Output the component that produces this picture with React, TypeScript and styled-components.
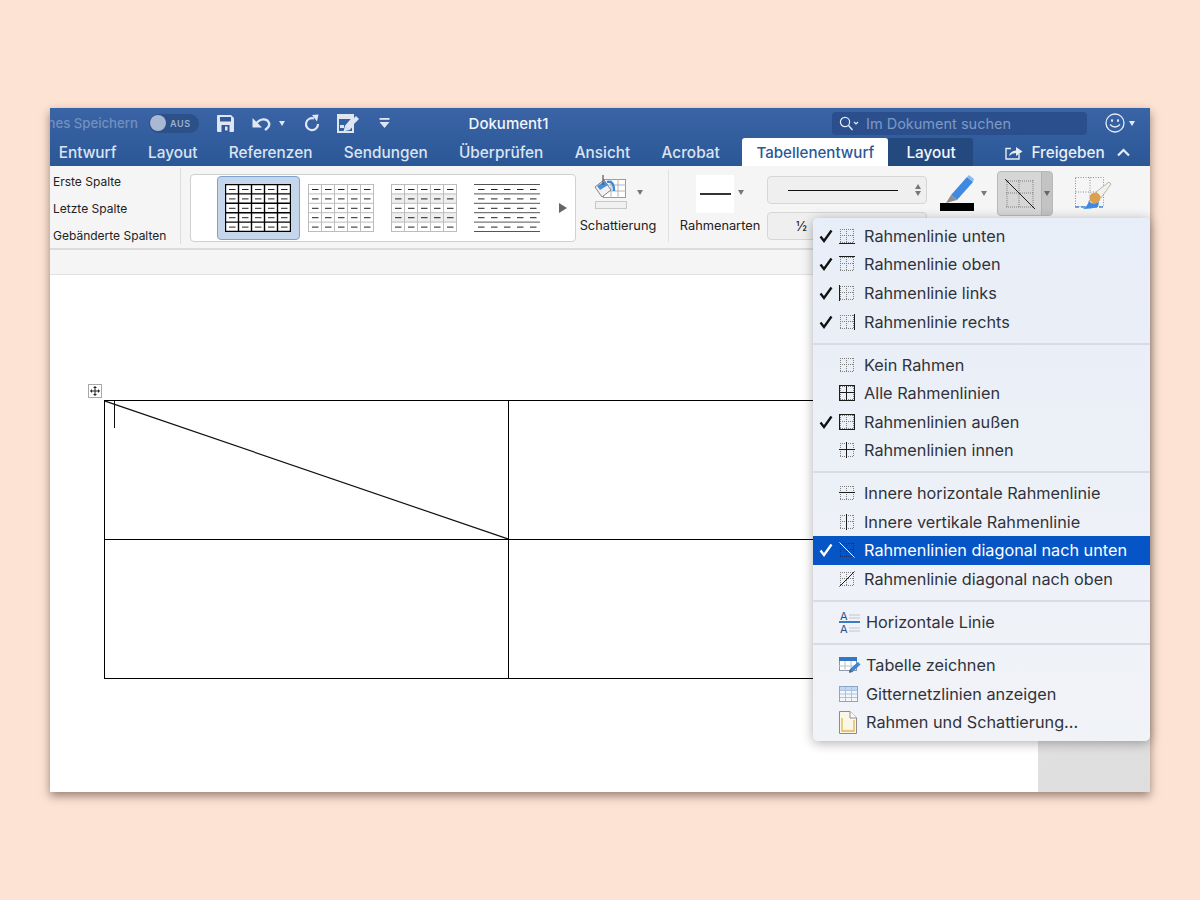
import React from "react";
import styled, { createGlobalStyle } from "styled-components";

const Global = createGlobalStyle`
  html, body { margin: 0; padding: 0; background: #fde3d3; height: 100%; }
  body { font-family: Inter, "Liberation Sans", sans-serif; }
  #root { height: 900px; padding-top: 108px; box-sizing: border-box; }
`;

const Window = styled.div`
  position: relative;
  margin-left: 50px;
  width: 1100px;
  height: 684px;
  display: flex;
  flex-direction: column;
  background: #fff;
  box-shadow: 0 4px 9px rgba(70, 50, 40, 0.55);
`;
const Head = styled.div`
  background: linear-gradient(#3a64a5, #2b5797);
  height: 58px;
  flex: none;
`;
const TitleBar = styled.div`
  height: 30px;
  display: flex;
  align-items: center;
`;
const AutoSave = styled.div`
  width: 88px;
  overflow: hidden;
  display: flex;
  justify-content: flex-end;
  white-space: nowrap;
  font-size: 13.2px;
  font-weight: 500;
  color: #7390bd;
  flex: none;
`;
const Toggle = styled.div`
  margin-left: 11px;
  width: 50px;
  height: 19px;
  border-radius: 10px;
  background: #2c5088;
  display: flex;
  align-items: center;
  gap: 4px;
  flex: none;
`;
const Knob = styled.span`
  width: 16px;
  height: 16px;
  margin-left: 1px;
  border-radius: 50%;
  background: #a9b8d3;
`;
const ToggleText = styled.span`
  font-size: 9px;
  font-weight: 600;
  letter-spacing: 0.6px;
  color: #9fb2d1;
`;
const Quick = styled.div`
  margin-left: 18px;
  width: 178px;
  display: flex;
  align-items: center;
  flex: none;
`;
const Slot = styled.span<{ $w: number }>`
  width: ${(p) => p.$w}px;
  display: flex;
  align-items: center;
  flex: none;
`;
const DocTitle = styled.div`
  width: 227px;
  text-align: center;
  font-size: 15px;
  font-weight: 500;
  color: #f2f5fa;
  flex: none;
`;
const Search = styled.div`
  margin-left: 210px;
  width: 255px;
  height: 23px;
  box-sizing: border-box;
  padding-left: 7px;
  border-radius: 4px;
  background: #2b4f8c;
  display: flex;
  align-items: center;
  gap: 7px;
  font-size: 14.5px;
  color: #7e99c4;
  flex: none;
`;
const Smiley = styled.div`
  margin-left: 18px;
  display: flex;
  align-items: center;
  gap: 4px;
`;
const TabRow = styled.div`
  height: 28px;
  display: flex;
  align-items: stretch;
`;
const Tab = styled.div`
  padding: 0 15.7px;
  display: flex;
  align-items: center;
  font-size: 15.35px;
  font-weight: 500;
  color: #dbe4f1;
  white-space: nowrap;
  &:first-child { margin-left: -7px; }
`;
const ActiveTab = styled(Tab)`
  margin-left: 7px;
  width: 146px;
  padding: 0 14px;
  box-sizing: border-box;
  background: #fff;
  color: #2b579a;
  border-radius: 3px 3px 0 0;
  font-size: 15.1px;
`;
const DarkTab = styled(Tab)`
  width: 85px;
  padding: 0 18px;
  box-sizing: border-box;
  background: #24497f;
  color: #f3f6fb;
  border-radius: 0 3px 0 0;
`;
const Share = styled.div`
  margin-left: 32px;
  display: flex;
  align-items: center;
  gap: 8px;
  font-size: 15.35px;
  font-weight: 500;
  color: #e8eef6;
`;
const Chevron = styled.span`
  margin-left: 4px;
  display: flex;
  align-items: center;
`;
const Ribbon = styled.div`
  height: 84px;
  flex: none;
  box-sizing: border-box;
  border-bottom: 2px solid #dcdcdc;
  background: #f5f5f5;
  display: flex;
  align-items: flex-start;
  overflow: hidden;
`;
const Checks = styled.div`
  width: 131px;
  height: 76px;
  margin-top: 2px;
  padding: 6px 0 1px 3px;
  box-sizing: border-box;
  border-right: 1px solid #dedede;
  display: flex;
  flex-direction: column;
  justify-content: space-between;
  font-size: 12px;
  color: #222;
  flex: none;
`;
const Gallery = styled.div`
  margin: 8px 0 0 9px;
  width: 386px;
  height: 68px;
  box-sizing: border-box;
  background: #fff;
  border: 1px solid #d0d0d0;
  border-radius: 4px;
  display: flex;
  align-items: center;
  padding-left: 26px;
  flex: none;
`;
const Thumb = styled.div<{ $selected?: boolean }>`
  width: 83px;
  height: 64px;
  box-sizing: border-box;
  padding-top: 7px;
  padding-left: 7px;
  border: 1px solid ${(p) => (p.$selected ? "#7ea3cf" : "transparent")};
  border-radius: 4px;
  background: ${(p) => (p.$selected ? "#c6d6ea" : "transparent")};
  flex: none;
`;
const GalleryArrow = styled.span`
  margin-left: 10px;
  width: 0;
  height: 0;
  border-left: 8px solid #666;
  border-top: 5.5px solid transparent;
  border-bottom: 5.5px solid transparent;
`;
const Group = styled.div<{ $w: number; $ml: number }>`
  width: ${(p) => p.$w}px;
  margin-left: ${(p) => p.$ml}px;
  height: 76px;
  margin-top: 2px;
  display: flex;
  flex-direction: column;
  align-items: center;
  justify-content: space-between;
  padding-bottom: 11px;
  box-sizing: border-box;
  flex: none;
`;
const GroupLabel = styled.div`
  font-size: 12.8px;
  color: #222;
  white-space: nowrap;
`;
const IconWithCaret = styled.div<{ $gap: number }>`
  height: 48px;
  display: flex;
  align-items: center;
  gap: ${(p) => p.$gap}px;
`;
const VSep = styled.div`
  margin: 4px 0 0 11px;
  width: 1px;
  height: 72px;
  background: #e0e0e0;
  flex: none;
`;
const LineSwatch = styled.div`
  width: 38px;
  height: 38px;
  margin-top: 4px;
  background: #fff;
  display: flex;
  align-items: center;
  justify-content: center;
`;
const SwatchLine = styled.span`
  width: 31px;
  height: 1.5px;
  background: #333;
`;
const Combos = styled.div`
  margin: 10px 0 0 7px;
  width: 160px;
  display: flex;
  flex-direction: column;
  gap: 8px;
  flex: none;
`;
const Combo = styled.div`
  height: 28px;
  box-sizing: border-box;
  background: #efefef;
  border: 1px solid #d6d6d6;
  border-radius: 4px;
  display: flex;
  align-items: center;
  padding: 0 5px 0 20px;
  font-size: 13px;
  color: #222;
`;
const ComboHalf = styled.span`
  margin-left: 8px;
`;
const ComboLine = styled.span`
  width: 110px;
  height: 1px;
  background: #111;
`;
const Stepper = styled.span`
  margin-left: auto;
  display: flex;
  flex-direction: column;
  gap: 2px;
`;
const Tri = styled.span<{ $up?: boolean; $c?: string }>`
  width: 0;
  height: 0;
  border-left: 3.5px solid transparent;
  border-right: 3.5px solid transparent;
  ${(p) => (p.$up ? "border-bottom" : "border-top")}: 5px solid ${(p) => p.$c ?? "#777"};
`;
const PenTool = styled.div`
  margin: 8px 0 0 13px;
  display: flex;
  align-items: center;
  gap: 5px;
  flex: none;
`;
const BorderButton = styled.div`
  margin: 5px 0 0 10px;
  width: 56px;
  height: 45px;
  box-sizing: border-box;
  background: #d6d6d6;
  border: 1px solid #b9b9b9;
  border-radius: 4px;
  display: flex;
  flex: none;
`;
const BorderFace = styled.span`
  width: 43px;
  display: flex;
  align-items: center;
  justify-content: center;
`;
const BorderDrop = styled.span`
  flex: 1;
  background: #c3c3c3;
  border-left: 1px solid #b3b3b3;
  display: flex;
  align-items: center;
  justify-content: center;
`;
const Painter = styled.div`
  margin: 10px 0 0 21px;
  flex: none;
`;
const Band = styled.div`
  height: 24px;
  flex: none;
  background: #f5f5f5;
  border-bottom: 1px solid #e2e2e2;
`;
const Body = styled.div`
  flex: 1;
  display: flex;
  min-height: 0;
`;
const Page = styled.div`
  width: 988px;
  flex: none;
  background: #fff;
  box-sizing: border-box;
  padding: 125px 0 0 54px;
`;
const Side = styled.div`
  flex: 1;
  background: linear-gradient(135deg, #e6e6e6, #dedede);
`;
const TableWrap = styled.div`
  position: relative;
  width: 810px;
`;
const Grid = styled.div`
  display: grid;
  grid-template-columns: 404px 405px;
  grid-auto-rows: 139px;
  border-top: 1px solid #000;
  border-left: 1px solid #000;
`;
const Cell = styled.div`
  position: relative;
  border-right: 1px solid #000;
  border-bottom: 1px solid #000;
`;
const Diagonal = styled.svg`
  position: absolute;
  inset: 0;
  width: 100%;
  height: 100%;
`;
const Caret = styled.span`
  position: absolute;
  left: 9px;
  top: 0;
  width: 1px;
  height: 27px;
  background: #111;
`;
const MoveHandle = styled.div`
  position: absolute;
  left: -16px;
  top: -16px;
  width: 14px;
  height: 14px;
  box-sizing: border-box;
  background: #fff;
  border: 1px solid #a8a8a8;
  display: flex;
  align-items: center;
  justify-content: center;
`;
const Menu = styled.div`
  position: absolute;
  left: 763px;
  top: 110px;
  width: 337px;
  height: 523px;
  box-sizing: border-box;
  padding-top: 3.6px;
  border-radius: 5px;
  background: linear-gradient(#e8eef7, #f1f3f7);
  box-shadow: 0 2px 12px rgba(0, 0, 0, 0.32);
`;
const Row = styled.div<{ $active?: boolean }>`
  height: 28.55px;
  display: flex;
  align-items: center;
  font-size: 16.25px;
  color: ${(p) => (p.$active ? "#fff" : "#30333a")};
  background: ${(p) => (p.$active ? "#0655c7" : "transparent")};
  white-space: nowrap;
`;
const CheckBox = styled.span`
  width: 26px;
  padding-left: 6px;
  box-sizing: border-box;
  display: flex;
  align-items: center;
  flex: none;
`;
const RowIcon = styled.span<{ $wide?: boolean }>`
  width: ${(p) => (p.$wide ? 27 : 25)}px;
  display: flex;
  align-items: center;
  flex: none;
`;
const Sep = styled.div`
  height: 14.55px;
  display: flex;
  align-items: center;
  &::after {
    content: "";
    margin-top: 1px;
    width: 100%;
    height: 2px;
    background: #d9dde3;
  }
`;

function TableThumb({ kind }: { kind: "black" | "gray" | "band" | "lines" }) {
  const W = 66;
  const H = 48;
  const xs = [0, 1, 2, 3, 4, 5].map((i) => 0.5 + (i * (W - 1)) / 5);
  const ys = [0, 1, 2, 3, 4, 5].map((i) => 0.5 + (i * (H - 1)) / 5);
  const stroke = kind === "black" ? "#000" : kind === "lines" ? "#555" : "#bdbdbd";
  return (
    <svg width={W} height={H} style={{ display: "block" }}>
      {kind === "black" && <rect width={W} height={H} fill="#fff" />}
      {kind === "band" && (
        <>
          <rect x="0" y={ys[1]} width={W} height={ys[2] - ys[1]} fill="#efefef" />
          <rect x="0" y={ys[3]} width={W} height={ys[4] - ys[3]} fill="#efefef" />
        </>
      )}
      {ys.map((y) => (
        <line key={y} x1="0" x2={W} y1={y} y2={y} stroke={stroke} strokeWidth={kind === "black" ? 1.4 : 1} />
      ))}
      {kind !== "lines" &&
        xs.map((x) => (
          <line key={x} x1={x} x2={x} y1="0" y2={H} stroke={stroke} strokeWidth={kind === "black" ? 1.4 : 1} />
        ))}
      {ys.slice(0, 5).map((y) =>
        xs.slice(0, 5).map((x) => (
          <line key={`${x}-${y}`} x1={x + 3.5} x2={x + 10} y1={y + 5} y2={y + 5} stroke="#222" strokeWidth="1" />
        ))
      )}
    </svg>
  );
}

type Edge = "t" | "b" | "l" | "r" | "h" | "v" | "d" | "u";

function BorderIcon({ lines, light, size = 16 }: { lines: Edge[]; light?: boolean; size?: number }) {
  const c = light ? "#fff" : "#1c1c1c";
  const has = (e: Edge) => lines.includes(e);
  const dots = light ? "#1d2f6b" : "#808080";
  const rows = [1.5, 7.5, 14.5];
  return (
    <svg width={size} height={size} viewBox="0 0 16 16" style={{ display: "block" }}>
      <g stroke={dots} strokeDasharray="1 1" strokeWidth="1">
        {rows.map((r) => (
          <line key={`h${r}`} x1="1" x2="15" y1={r} y2={r} vectorEffect="non-scaling-stroke" />
        ))}
        {rows.map((r) => (
          <line key={`v${r}`} x1={r} x2={r} y1="1" y2="15" vectorEffect="non-scaling-stroke" />
        ))}
      </g>
      <g stroke={c} strokeWidth="1">
        {has("t") && <line x1="0" x2="16" y1="0.5" y2="0.5" />}
        {has("b") && <line x1="0" x2="16" y1="15.5" y2="15.5" />}
        {has("l") && <line x1="0.5" x2="0.5" y1="0" y2="16" />}
        {has("r") && <line x1="15.5" x2="15.5" y1="0" y2="16" />}
        {has("h") && <line x1="0" x2="16" y1="7.5" y2="7.5" />}
        {has("v") && <line x1="7.5" x2="7.5" y1="0" y2="16" />}
        {has("d") && <line x1="0.5" x2="15.5" y1="0.5" y2="15.5" vectorEffect="non-scaling-stroke" />}
        {has("u") && <line x1="0.5" x2="15.5" y1="15.5" y2="0.5" vectorEffect="non-scaling-stroke" />}
      </g>
    </svg>
  );
}

function Check({ light }: { light?: boolean }) {
  return (
    <svg width="14" height="14" viewBox="0 0 14 14">
      <path d="M1.5 7.5 L5 12 L12.5 1.5" fill="none" stroke={light ? "#fff" : "#111"} strokeWidth="2.3" />
    </svg>
  );
}

function HLineIcon() {
  return (
    <svg width="22" height="25" viewBox="0 0 22 25" style={{ display: "block" }}>
      <text x="1" y="10" fontSize="11" fontFamily="Inter, sans-serif" fill="#2a4f8c">A</text>
      <line x1="10" x2="21" y1="5" y2="5" stroke="#c2c6cc" strokeWidth="1" />
      <line x1="10" x2="21" y1="8" y2="8" stroke="#c2c6cc" strokeWidth="1" />
      <rect x="0" y="11" width="21" height="2" fill="#3b7ac4" />
      <text x="1" y="23" fontSize="11" fontFamily="Inter, sans-serif" fill="#2a4f8c">A</text>
      <line x1="10" x2="21" y1="18" y2="18" stroke="#c2c6cc" strokeWidth="1" />
      <line x1="10" x2="21" y1="21" y2="21" stroke="#c2c6cc" strokeWidth="1" />
    </svg>
  );
}
function DrawTableIcon() {
  return (
    <svg width="22" height="17" viewBox="0 0 22 17" style={{ display: "block" }}>
      <rect x="0.5" y="0.5" width="17" height="13" fill="#fff" stroke="#8a97a8" />
      <rect x="0" y="0" width="18" height="4" fill="#3277c5" />
      <line x1="6" x2="6" y1="4" y2="14" stroke="#b9c2cc" />
      <line x1="12" x2="12" y1="4" y2="14" stroke="#b9c2cc" />
      <line x1="0" x2="18" y1="9" y2="9" stroke="#b9c2cc" />
      <path d="M10 15 L11 12 L19 5 L21.5 7.5 L13.5 15 Z" fill="#3d86d6" />
      <path d="M10 16 L11 12.5 L13.5 15 Z" fill="#55606e" />
    </svg>
  );
}
function GridIcon() {
  return (
    <svg width="19" height="16" viewBox="0 0 19 16" style={{ display: "block" }}>
      <rect x="0.5" y="0.5" width="18" height="15" fill="#f3f7fc" stroke="#8aa7ca" />
      <rect x="1" y="1" width="17" height="3" fill="#c3d8ef" />
      <line x1="6.5" x2="6.5" y1="1" y2="15" stroke="#a7c2e2" />
      <line x1="12.5" x2="12.5" y1="1" y2="15" stroke="#a7c2e2" />
      <line x1="1" x2="18" y1="4.5" y2="4.5" stroke="#a7c2e2" />
      <line x1="1" x2="18" y1="8" y2="8" stroke="#a7c2e2" />
      <line x1="1" x2="18" y1="11.5" y2="11.5" stroke="#a7c2e2" />
    </svg>
  );
}
function DocIcon() {
  return (
    <svg width="18" height="23" viewBox="0 0 18 23" style={{ display: "block" }}>
      <path d="M0.5 0.5 H11 L17.5 7 V22.5 H0.5 Z" fill="#fbf7e8" stroke="#8b8b8b" />
      <path d="M3 7 V20 H15 V9" fill="none" stroke="#e2b64d" strokeWidth="1.3" />
      <path d="M11 0.5 V7 H17.5" fill="#fff" stroke="#8b8b8b" />
    </svg>
  );
}

function SaveIcon() {
  return (
    <svg width="17" height="17" viewBox="0 0 17 17">
      <path d="M1 0 H14 L17 3 V16 a1 1 0 0 1 -1 1 H1 a1 1 0 0 1 -1 -1 V1 a1 1 0 0 1 1 -1 Z" fill="#dfe6f1" />
      <rect x="3" y="2" width="11" height="4.5" fill="#31599a" />
      <rect x="4.5" y="10" width="8" height="7" fill="#31599a" />
      <rect x="8" y="11.5" width="2.5" height="4" fill="#dfe6f1" />
    </svg>
  );
}
function UndoIcon() {
  return (
    <svg width="19" height="15" viewBox="0 0 19 15">
      <path d="M4 8 C8 2 15 2 17 7 C18 10 16 12 13 14" fill="none" stroke="#e0e7f2" strokeWidth="2.4" />
      <path d="M0.5 2 L0.5 11.5 L10 11.5 Z" fill="#e0e7f2" />
    </svg>
  );
}
function RedoIcon() {
  return (
    <svg width="16" height="18" viewBox="0 0 16 18">
      <path d="M10 4.5 A6 6 0 1 0 14 10" fill="none" stroke="#e0e7f2" strokeWidth="2.2" />
      <path d="M8 1 L14.5 0.5 L13 7.5 Z" fill="#e0e7f2" />
    </svg>
  );
}
function EditIcon() {
  return (
    <svg width="23" height="19" viewBox="0 0 23 19">
      <path d="M1 1 H16 V4 L9 12 L8 16 L12 15 L16 11 V18 H1 Z" fill="none" stroke="#dfe6f1" strokeWidth="2" />
      <rect x="2" y="2" width="13" height="3" fill="#dfe6f1" />
      <path d="M10 11 L19 2 L22 5 L13 14 L9 15 Z" fill="#dfe6f1" />
      <path d="M3 11 H7 V14 H3 Z" fill="#dfe6f1" />
    </svg>
  );
}
function CustomizeIcon() {
  return (
    <svg width="11" height="10" viewBox="0 0 11 10">
      <rect x="0.5" y="0" width="10" height="1.8" fill="#dfe6f1" />
      <path d="M0.5 4 H10.5 L5.5 10 Z" fill="#dfe6f1" />
    </svg>
  );
}
function SearchIcon() {
  return (
    <svg width="20" height="15" viewBox="0 0 20 15">
      <circle cx="6" cy="6" r="4.6" fill="none" stroke="#e6ecf5" strokeWidth="1.2" />
      <line x1="9.5" y1="9.5" x2="13.5" y2="14" stroke="#e6ecf5" strokeWidth="1.4" />
      <path d="M15 6 L17 8 L19 6" fill="none" stroke="#e6ecf5" strokeWidth="1.2" />
    </svg>
  );
}
function SmileyIcon() {
  return (
    <svg width="20" height="20" viewBox="0 0 20 20">
      <circle cx="10" cy="10" r="9" fill="none" stroke="#e6ecf5" strokeWidth="1.3" />
      <ellipse cx="7" cy="7.5" rx="1" ry="1.5" fill="#e6ecf5" />
      <ellipse cx="13" cy="7.5" rx="1" ry="1.5" fill="#e6ecf5" />
      <path d="M5 11.5 Q10 16.5 15 11.5" fill="none" stroke="#e6ecf5" strokeWidth="1.3" />
    </svg>
  );
}
function ShareIcon() {
  return (
    <svg width="18" height="15" viewBox="0 0 18 15">
      <path d="M6 3.5 H1 V14 H14 V9" fill="none" stroke="#e6ecf5" strokeWidth="1.4" />
      <path d="M4 11 Q5 6 11 5.5 V2 L17.5 6.5 L11 11 V8 Q7 8 4 11 Z" fill="#e6ecf5" />
    </svg>
  );
}
function ChevronUp() {
  return (
    <svg width="13" height="9" viewBox="0 0 13 9">
      <path d="M1 7.5 L6.5 2 L12 7.5" fill="none" stroke="#e6ecf5" strokeWidth="2.2" />
    </svg>
  );
}
function ShadingIcon() {
  return (
    <svg width="33" height="34" viewBox="0 0 33 34" style={{ display: "block" }}>
      <rect x="9.5" y="4.5" width="22" height="18" fill="#fff" stroke="#9a9a9a" />
      <line x1="17" x2="17" y1="4" y2="23" stroke="#b5b5b5" />
      <line x1="24" x2="24" y1="4" y2="23" stroke="#b5b5b5" />
      <line x1="9" x2="32" y1="10" y2="10" stroke="#b5b5b5" />
      <line x1="9" x2="32" y1="16" y2="16" stroke="#b5b5b5" />
      <path d="M1 12 L10 5 L17 15 L8 22 Z" fill="#f2f2f2" stroke="#7c8694" />
      <path d="M3 11 L11 6 L14 10 L6 15 Z" fill="#4a90d9" />
      <path d="M9 0 V10" stroke="#555" strokeWidth="1.2" />
      <path d="M13 7 Q20 5 20 16" fill="none" stroke="#3f8ad6" strokeWidth="2.4" />
      <rect x="1.5" y="26.5" width="31" height="7" fill="#f0f0f0" stroke="#c8c8c8" />
    </svg>
  );
}
function PenIcon() {
  return (
    <svg width="36" height="38" viewBox="0 0 36 38" style={{ display: "block" }}>
      <path d="M11 21 L27 3 L33 8 L17 26 Z" fill="#3f8ae0" />
      <path d="M27 3 L29 1 L34 5 L33 8 Z" fill="#8bb9ec" />
      <path d="M11 21 L6 29 L17 26 Z" fill="#8d8d8d" />
      <rect x="0" y="29" width="34" height="8" fill="#000" />
    </svg>
  );
}
function PainterIcon() {
  return (
    <svg width="38" height="36" viewBox="0 0 38 36" style={{ display: "block" }}>
      <g stroke="#8e8e8e" strokeDasharray="1 1.5" fill="none">
        <rect x="1.5" y="1.5" width="28" height="29" />
        <line x1="16" x2="16" y1="1.5" y2="30" />
        <line x1="1.5" x2="29" y1="16" y2="16" />
      </g>
      <line x1="1" x2="31" y1="31" y2="31" stroke="#3f8ae0" strokeWidth="1.4" strokeDasharray="4 2" />
      <path d="M22 16 L35 6 L37 8 L27 22 Z" fill="#f4f1ea" stroke="#999" strokeWidth="0.7" />
      <circle cx="21" cy="22" r="5.5" fill="#dca050" />
      <path d="M15 24 Q17 30 25 26 L24 31 Q17 33 9 33 Q14 30 15 24 Z" fill="#3f8ae0" />
    </svg>
  );
}

type Item = { label: string; check?: boolean; lines?: Edge[]; icon?: React.ReactNode; active?: boolean } | "sep";

const items: Item[] = [
  { label: "Rahmenlinie unten", check: true, lines: ["b"] },
  { label: "Rahmenlinie oben", check: true, lines: ["t"] },
  { label: "Rahmenlinie links", check: true, lines: ["l"] },
  { label: "Rahmenlinie rechts", check: true, lines: ["r"] },
  "sep",
  { label: "Kein Rahmen", lines: [] },
  { label: "Alle Rahmenlinien", lines: ["t", "b", "l", "r", "h", "v"] },
  { label: "Rahmenlinien außen", check: true, lines: ["t", "b", "l", "r"] },
  { label: "Rahmenlinien innen", lines: ["h", "v"] },
  "sep",
  { label: "Innere horizontale Rahmenlinie", lines: ["h"] },
  { label: "Innere vertikale Rahmenlinie", lines: ["v"] },
  { label: "Rahmenlinien diagonal nach unten", check: true, lines: ["d"], active: true },
  { label: "Rahmenlinie diagonal nach oben", lines: ["u"] },
  "sep",
  { label: "Horizontale Linie", icon: <HLineIcon /> },
  "sep",
  { label: "Tabelle zeichnen", icon: <DrawTableIcon /> },
  { label: "Gitternetzlinien anzeigen", icon: <GridIcon /> },
  { label: "Rahmen und Schattierung...", icon: <DocIcon /> },
];

export default function App() {
  return (
    <>
      <Global />
      <Window>
        <Head>
          <TitleBar>
            <AutoSave>Automatisches Speichern</AutoSave>
            <Toggle>
              <Knob />
              <ToggleText>AUS</ToggleText>
            </Toggle>
            <Quick>
              <Slot $w={35}><SaveIcon /></Slot>
              <Slot $w={27}><UndoIcon /></Slot>
              <Slot $w={25}><Tri $c="#e0e7f2" /></Slot>
              <Slot $w={33}><RedoIcon /></Slot>
              <Slot $w={42}><EditIcon /></Slot>
              <Slot $w={16}><CustomizeIcon /></Slot>
            </Quick>
            <DocTitle>Dokument1</DocTitle>
            <Search>
              <SearchIcon />
              <span>Im Dokument suchen</span>
            </Search>
            <Smiley>
              <SmileyIcon />
              <Tri $c="#e6ecf5" />
            </Smiley>
          </TitleBar>
          <TabRow>
            <Tab>Entwurf</Tab>
            <Tab>Layout</Tab>
            <Tab>Referenzen</Tab>
            <Tab>Sendungen</Tab>
            <Tab>Überprüfen</Tab>
            <Tab>Ansicht</Tab>
            <Tab>Acrobat</Tab>
            <ActiveTab>Tabellenentwurf</ActiveTab>
            <DarkTab>Layout</DarkTab>
            <Share>
              <ShareIcon />
              <span>Freigeben</span>
              <Chevron><ChevronUp /></Chevron>
            </Share>
          </TabRow>
        </Head>
        <Ribbon>
          <Checks>
            <span>Erste Spalte</span>
            <span>Letzte Spalte</span>
            <span>Gebänderte Spalten</span>
          </Checks>
          <Gallery>
            <Thumb $selected><TableThumb kind="black" /></Thumb>
            <Thumb><TableThumb kind="gray" /></Thumb>
            <Thumb><TableThumb kind="band" /></Thumb>
            <Thumb><TableThumb kind="lines" /></Thumb>
            <GalleryArrow />
          </Gallery>
          <Group $w={78} $ml={3}>
            <IconWithCaret $gap={10}>
              <ShadingIcon />
              <Tri />
            </IconWithCaret>
            <GroupLabel>Schattierung</GroupLabel>
          </Group>
          <VSep />
          <Group $w={80} $ml={11}>
            <IconWithCaret $gap={4}>
              <LineSwatch><SwatchLine /></LineSwatch>
              <Tri />
            </IconWithCaret>
            <GroupLabel>Rahmenarten</GroupLabel>
          </Group>
          <Combos>
            <Combo>
              <ComboLine />
              <Stepper><Tri $up /><Tri /></Stepper>
            </Combo>
            <Combo>
              <ComboHalf>½</ComboHalf>
            </Combo>
          </Combos>
          <PenTool>
            <PenIcon />
            <Tri />
          </PenTool>
          <BorderButton>
            <BorderFace>
              <BorderIcon lines={["d"]} size={32} />
            </BorderFace>
            <BorderDrop><Tri $c="#666" /></BorderDrop>
          </BorderButton>
          <Painter>
            <PainterIcon />
          </Painter>
        </Ribbon>
        <Band />
        <Body>
          <Page>
            <TableWrap>
              <MoveHandle>
                <svg width="10" height="10" viewBox="0 0 10 10">
                  <path d="M5 0 L7 2 H3 Z M5 10 L3 8 H7 Z M0 5 L2 3 V7 Z M10 5 L8 7 V3 Z" fill="#222" />
                  <path d="M5 1 V9 M1 5 H9" stroke="#222" strokeWidth="1" />
                </svg>
              </MoveHandle>
              <Grid>
                <Cell>
                  <Diagonal viewBox="0 0 100 100" preserveAspectRatio="none">
                    <line x1="0" y1="0" x2="100" y2="100" stroke="#111" strokeWidth="1.2" vectorEffect="non-scaling-stroke" />
                  </Diagonal>
                  <Caret />
                </Cell>
                <Cell />
                <Cell />
                <Cell />
              </Grid>
            </TableWrap>
          </Page>
          <Side />
        </Body>
        <Menu>
          {items.map((it, i) =>
            it === "sep" ? (
              <Sep key={i} />
            ) : (
              <Row key={i} $active={it.active}>
                <CheckBox>{it.check && <Check light={it.active} />}</CheckBox>
                <RowIcon $wide={!it.lines}>
                  {it.lines ? <BorderIcon lines={it.lines} light={it.active} /> : it.icon}
                </RowIcon>
                <span>{it.label}</span>
              </Row>
            )
          )}
        </Menu>
      </Window>
    </>
  );
}
